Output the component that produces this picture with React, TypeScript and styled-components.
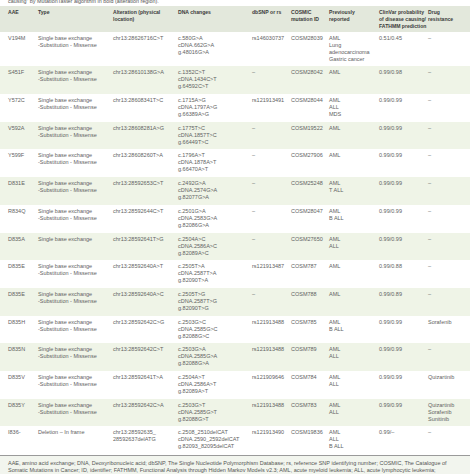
import styled, { createGlobalStyle } from 'styled-components';

const GlobalStyle = createGlobalStyle`
  html, body {
    margin: 0;
    padding: 0;
    background: #ffffff;
  }
  body {
    font-family: "Liberation Sans", Arial, sans-serif;
    overflow: hidden;
  }
`;

type Row = {
  aae: string;
  type: string[];
  alteration: string[];
  dna: string[];
  dbsnp: string;
  cosmic: string;
  reported: string[];
  clinvar: string;
  drug: string[];
};

const SUB = ['Single base exchange', '-Substitution - Missense'];

const rows: Row[] = [
  { aae: 'V194M', type: SUB, alteration: ['chr13:28626716C>T'], dna: ['c.580G>A', 'cDNA.662G>A', 'g.48016G>A'], dbsnp: 'rs146030737', cosmic: 'COSM28039', reported: ['AML', 'Lung', 'adenocarcinoma', 'Gastric cancer'], clinvar: '0.51/0.45', drug: ['–'] },
  { aae: 'S451F', type: SUB, alteration: ['chr13:28610138G>A'], dna: ['c.1352C>T', 'cDNA.1434C>T', 'g.64592C>T'], dbsnp: '–', cosmic: 'COSM28042', reported: ['AML'], clinvar: '0.99/0.98', drug: ['–'] },
  { aae: 'Y572C', type: SUB, alteration: ['chr13:28608341T>C'], dna: ['c.1715A>G', 'cDNA.1797A>G', 'g.66389A>G'], dbsnp: 'rs121913491', cosmic: 'COSM28044', reported: ['AML', 'ALL', 'MDS'], clinvar: '0.99/0.99', drug: ['–'] },
  { aae: 'V592A', type: SUB, alteration: ['chr13:28608281A>G'], dna: ['c.1775T>C', 'cDNA.1857T>C', 'g.66449T>C'], dbsnp: '–', cosmic: 'COSM19522', reported: ['AML'], clinvar: '0.99/0.99', drug: ['–'] },
  { aae: 'Y599F', type: SUB, alteration: ['chr13:28608260T>A'], dna: ['c.1796A>T', 'cDNA.1878A>T', 'g.66470A>T'], dbsnp: '–', cosmic: 'COSM27906', reported: ['AML'], clinvar: '0.99/0.99', drug: ['–'] },
  { aae: 'D831E', type: SUB, alteration: ['chr13:28592653C>T'], dna: ['c.2492G>A', 'cDNA.2574G>A', 'g.82077G>A'], dbsnp: '–', cosmic: 'COSM25248', reported: ['AML', 'T ALL'], clinvar: '0.99/0.99', drug: ['–'] },
  { aae: 'R834Q', type: SUB, alteration: ['chr13:28592644C>T'], dna: ['c.2501G>A', 'cDNA.2583G>A', 'g.82086G>A'], dbsnp: '–', cosmic: 'COSM28047', reported: ['AML', 'B ALL'], clinvar: '0.99/0.99', drug: ['–'] },
  { aae: 'D835A', type: ['Single base exchange'], alteration: ['chr13:28592641T>G'], dna: ['c.2504A>C', 'cDNA.2586A>C', 'g.82089A>C'], dbsnp: '–', cosmic: 'COSM27650', reported: ['AML', 'ALL'], clinvar: '0.99/0.99', drug: ['–'] },
  { aae: 'D835E', type: SUB, alteration: ['chr13:28592640A>T'], dna: ['c.2505T>A', 'cDNA.2587T>A', 'g.82090T>A'], dbsnp: 'rs121913487', cosmic: 'COSM787', reported: ['AML'], clinvar: '0.99/0.88', drug: ['–'] },
  { aae: 'D835E', type: SUB, alteration: ['chr13:28592640A>C'], dna: ['c.2505T>G', 'cDNA.2587T>G', 'g.82090T>G'], dbsnp: '–', cosmic: 'COSM788', reported: ['AML'], clinvar: '0.99/0.89', drug: ['–'] },
  { aae: 'D835H', type: SUB, alteration: ['chr13:28592642C>G'], dna: ['c.2503G>C', 'cDNA.2585G>C', 'g.82088G>C'], dbsnp: 'rs121913488', cosmic: 'COSM785', reported: ['AML', 'B ALL'], clinvar: '0.99/0.99', drug: ['Sorafenib'] },
  { aae: 'D835N', type: SUB, alteration: ['chr13:28592642C>T'], dna: ['c.2503G>A', 'cDNA.2585G>A', 'g.82088G>A'], dbsnp: 'rs121913488', cosmic: 'COSM789', reported: ['AML', 'ALL'], clinvar: '0.99/0.99', drug: ['–'] },
  { aae: 'D835V', type: SUB, alteration: ['chr13:28592641T>A'], dna: ['c.2504A>T', 'cDNA.2586A>T', 'g.82089A>T'], dbsnp: 'rs121909646', cosmic: 'COSM784', reported: ['AML', 'ALL'], clinvar: '0.99/0.99', drug: ['Quizartinib'] },
  { aae: 'D835Y', type: SUB, alteration: ['chr13:28592642C>A'], dna: ['c.2503G>T', 'cDNA.2585G>T', 'g.82088G>T'], dbsnp: 'rs121913488', cosmic: 'COSM783', reported: ['AML', 'ALL'], clinvar: '0.99/0.99', drug: ['Quizartinib', 'Sorafenib', 'Sunitinib'] },
  { aae: 'I836-', type: ['Deletion – In frame'], alteration: ['chr13:28592635_', '28592637delATG'], dna: ['c.2508_2510delCAT', 'cDNA.2590_2592delCAT', 'g.82093_82095delCAT'], dbsnp: 'rs121913490', cosmic: 'COSM19836', reported: ['AML', 'ALL', 'B ALL'], clinvar: '0.99/–', drug: ['–'] },
];

const headers: string[][] = [
  ['AAE'],
  ['Type'],
  ['Alteration (physical', 'location)'],
  ['DNA changes'],
  ['dbSNP or rs'],
  ['COSMIC', 'mutation ID'],
  ['Previously', 'reported'],
  ['ClinVar probability', 'of disease causing/', 'FATHMM prediction'],
  ['Drug', 'resistance'],
];

const App = () => {
  return (
    <>
      <GlobalStyle />
      <Page>
        <Caption>
          causing” by MutationTaster algorithm in bold (alteration region).
        </Caption>
        <Table>
          <HeaderRow>
            {headers.map((h, i) => (
              <HeadCell key={i}>
                {h.map((line, j) => (
                  <Line key={j}>{line}</Line>
                ))}
              </HeadCell>
            ))}
          </HeaderRow>
          {rows.map((r, i) => (
            <BodyRow key={i} $striped={i % 2 === 1}>
              <Cell>{r.aae}</Cell>
              <Cell>{r.type.map((l, j) => <Line key={j}>{l}</Line>)}</Cell>
              <Cell>{r.alteration.map((l, j) => <Line key={j}>{l}</Line>)}</Cell>
              <Cell>{r.dna.map((l, j) => <Line key={j}>{l}</Line>)}</Cell>
              <Cell>{r.dbsnp}</Cell>
              <Cell>{r.cosmic}</Cell>
              <Cell>{r.reported.map((l, j) => <Line key={j}>{l}</Line>)}</Cell>
              <Cell>{r.clinvar}</Cell>
              <Cell>{r.drug.map((l, j) => <Line key={j}>{l}</Line>)}</Cell>
            </BodyRow>
          ))}
        </Table>
        <Footnote>
          AAE, amino acid exchange; DNA, Deoxyribonucleic acid; dbSNP, The Single Nucleotide
          Polymorphism Database; rs, reference SNP identifying number; COSMIC, The Catalogue of
          Somatic Mutations in Cancer; ID, identifier; FATHMM, Functional Analysis through Hidden
          Markov Models v2.3; AML, acute myeloid leukemia; ALL, acute lymphocytic leukemia;
        </Footnote>
      </Page>
    </>
  );
};

export default App;

const Page = styled.div`
  width: 474px;
  height: 474px;
  overflow: hidden;
  display: flex;
  flex-direction: column;
`;

const Caption = styled.div`
  margin-top: -2px;
  padding-left: 8px;
  height: 9px;
  font-size: 5.4px;
  line-height: 7px;
  color: #555;
  white-space: nowrap;
`;

const Table = styled.div`
  width: 470px;
  display: flex;
  flex-direction: column;
`;

const columns = '30px 75px 65px 74px 39px 38px 50px 49px 1fr';

const HeaderRow = styled.div`
  display: grid;
  grid-template-columns: ${columns};
  padding: 3px 0 2px 8px;
  background: #e3e8dc;
  height: 26px;
  box-sizing: border-box;
`;

const HeadCell = styled.div`
  font-size: 5.1px;
  line-height: 7px;
  font-weight: 700;
  color: #3a3a3a;
  white-space: nowrap;
`;

const BodyRow = styled.div<{ $striped: boolean }>`
  display: grid;
  grid-template-columns: ${columns};
  padding: 3px 0 3.7px 8px;
  background: ${p => (p.$striped ? '#eff4e7' : '#ffffff')};
`;

const Cell = styled.div`
  font-size: 5.5px;
  line-height: 7px;
  color: #626262;
  white-space: nowrap;
  min-height: 21px;
`;

const Line = styled.div``;

const Footnote = styled.div`
  margin-top: 1px;
  width: 470px;
  box-sizing: border-box;
  border-top: 1px solid #9a9a9a;
  background: #f2f5ee;
  padding: 4px 14px 0 8px;
  font-size: 5.5px;
  line-height: 7px;
  color: #555;
  flex: 1;
`;
